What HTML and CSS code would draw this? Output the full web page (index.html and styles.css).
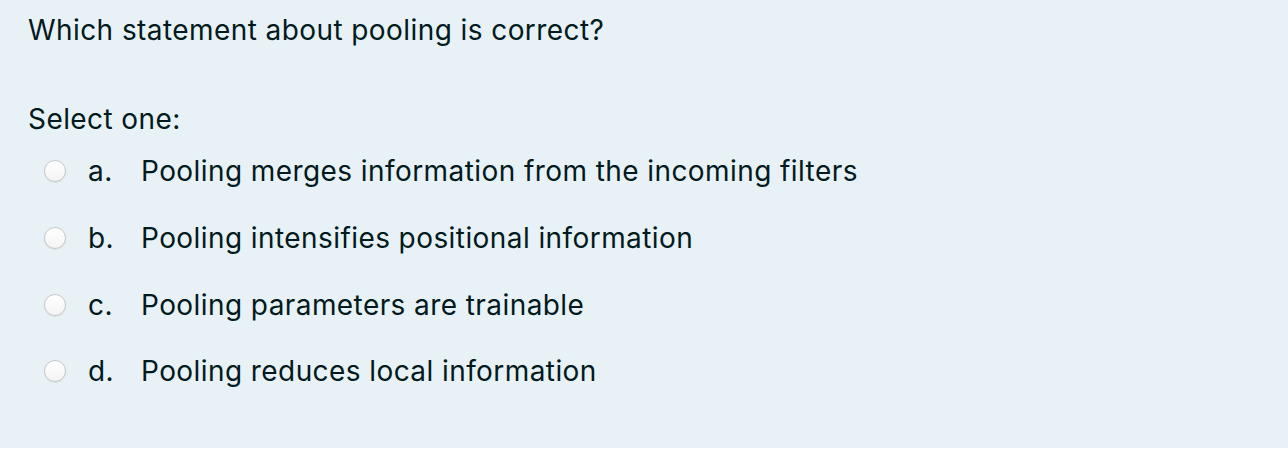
FILE: index.html
```html
<!DOCTYPE html>
<html lang="en">
<head>
<meta charset="utf-8">
<title>Question</title>
<link rel="stylesheet" href="styles.css">
</head>
<body>
<div class="formulation">
  <div class="qtext">Which statement about pooling is correct?</div>
  <div class="ablock">
    <div class="prompt">Select one:</div>
    <div class="answer">
      <label class="option"><span class="radio"></span><span class="letter">a.</span><span class="text">Pooling merges information from the incoming filters</span></label>
      <label class="option"><span class="radio"></span><span class="letter">b.</span><span class="text">Pooling intensifies positional information</span></label>
      <label class="option"><span class="radio"></span><span class="letter">c.</span><span class="text">Pooling parameters are trainable</span></label>
      <label class="option"><span class="radio"></span><span class="letter">d.</span><span class="text">Pooling reduces local information</span></label>
    </div>
  </div>
</div>
</body>
</html>
```

FILE: styles.css
```css
html, body {
  margin: 0;
  padding: 0;
  background: #ffffff;
}
body {
  font-family: Inter, "Noto Sans", sans-serif;
  color: #001a1e;
  font-size: 28px;
  letter-spacing: 0.42px;
}
.formulation {
  background: #e8f1f5;
  height: 448px;
  box-sizing: border-box;
  padding: 12px 29px 0 28px;
}
.qtext {
  line-height: 36px;
}
.ablock {
  margin-top: 53px;
}
.prompt {
  line-height: 36px;
}
.answer {
  display: flex;
  flex-direction: column;
  padding-top: 17px;
}
.option {
  display: flex;
  align-items: center;
  height: 66.7px;
  margin-top: -16px;
  margin-bottom: 16px;
}
.radio {
  width: 22px;
  height: 22px;
  border-radius: 50%;
  box-sizing: border-box;
  border: 1px solid #c9c9c9;
  background: linear-gradient(#ffffff, #f4f4f4);
  box-shadow: 0 0.5px 1px rgba(0,0,0,0.12);
  margin-left: 16px;
  flex: none;
}
.letter {
  margin-left: 22px;
  width: 53px;
}
```
